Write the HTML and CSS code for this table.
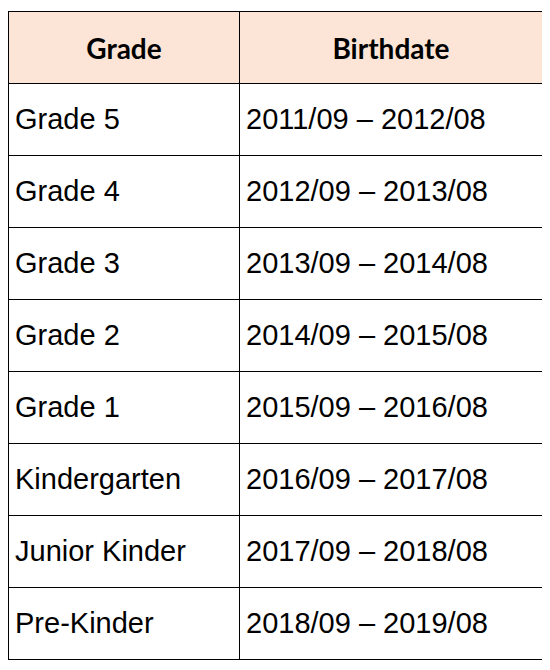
FILE: index.html
```html
<!DOCTYPE html>
<html>
<head>
<meta charset="utf-8">
<link rel="stylesheet" href="styles.css">
</head>
<body>
<table class="grades">
  <thead>
    <tr><th class="col-grade">Grade</th><th class="col-date">Birthdate</th></tr>
  </thead>
  <tbody>
    <tr><td>Grade 5</td><td>2011/09 – 2012/08</td></tr>
    <tr><td>Grade 4</td><td>2012/09 – 2013/08</td></tr>
    <tr><td>Grade 3</td><td>2013/09 – 2014/08</td></tr>
    <tr><td>Grade 2</td><td>2014/09 – 2015/08</td></tr>
    <tr><td>Grade 1</td><td>2015/09 – 2016/08</td></tr>
    <tr><td>Kindergarten</td><td>2016/09 – 2017/08</td></tr>
    <tr><td>Junior Kinder</td><td>2017/09 – 2018/08</td></tr>
    <tr><td>Pre-Kinder</td><td>2018/09 – 2019/08</td></tr>
  </tbody>
</table>
</body>
</html>
```
FILE: styles.css
```css
html, body { background: #ffffff; }
body {
  margin: 11px 8px 8px 8px;
  font-family: "Liberation Sans", Arial, sans-serif;
  color: #000;
}
.grades {
  border-collapse: collapse;
  width: 534px;
  table-layout: fixed;
}
.grades th, .grades td {
  border: 1px solid #000;
  height: 72px;
  padding: 0 0 0 6px;
  box-sizing: border-box;
  vertical-align: middle;
}
.grades th {
  background: #fce4d6;
  font-family: Lato, "Open Sans", sans-serif;
  font-weight: 700;
  font-size: 28px;
  text-align: center;
  padding: 0;
}
.grades td {
  font-size: 29px;
  text-align: left;
}
.col-grade { width: 231px; }
.col-date { width: 303px; }
```
